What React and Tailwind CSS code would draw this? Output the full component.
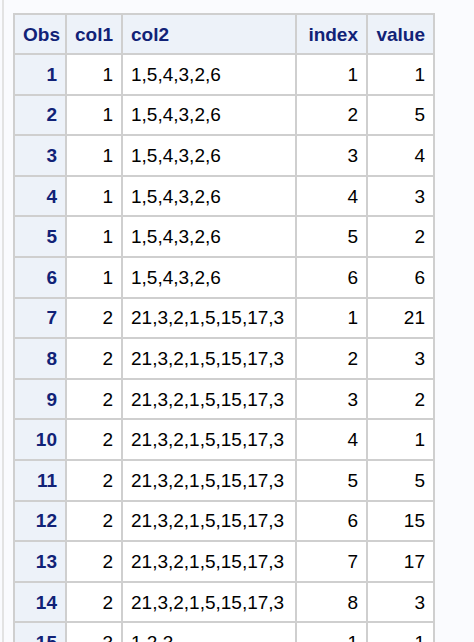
import React from "react";

const rows = [];
for (let i = 0; i < 6; i++) {
  const v = [1, 5, 4, 3, 2, 6];
  rows.push([i + 1, 1, "1,5,4,3,2,6", i + 1, v[i]]);
}
const v2 = [21, 3, 2, 1, 5, 15, 17, 3];
for (let i = 0; i < 8; i++) {
  rows.push([i + 7, 2, "21,3,2,1,5,15,17,3", i + 1, v2[i]]);
}
rows.push([15, 3, "1,2,3", 1, 1]);

export default function App() {
  return (
    <div className="h-[642px] w-[474px] overflow-hidden bg-[#fafbfe] pl-[2px]">
      <div className="h-full border-l-2 border-[#e3e3e3] pl-[9px] pt-[13px]">
        <table
          className="w-[422px] table-fixed border-collapse text-[19px] leading-none"
          style={{ fontFamily: '"Liberation Sans", Arial, sans-serif' }}
        >
          <thead>
            <tr className="h-[40px] bg-[#edf2f9] font-bold text-[#112277]">
              <th className="w-[52px] border-2 border-[#cfcfcf] px-[8px] text-left">Obs</th>
              <th className="w-[56px] border-2 border-[#cfcfcf] px-[8px] text-left">col1</th>
              <th className="w-[174px] border-2 border-[#cfcfcf] px-[8px] text-left">col2</th>
              <th className="w-[71px] border-2 border-[#cfcfcf] px-[8px] text-right">index</th>
              <th className="w-[67px] border-2 border-[#cfcfcf] px-[8px] text-right">value</th>
            </tr>
          </thead>
          <tbody>
            {rows.map((r) => (
              <tr key={r[0]} className="h-[40.6px]">
                <th className="border-2 border-[#cfcfcf] bg-[#edf2f9] px-[8px] text-right font-bold text-[#112277]">
                  {r[0]}
                </th>
                <td className="border-2 border-[#cfcfcf] bg-white px-[8px] text-right text-black">{r[1]}</td>
                <td className="border-2 border-[#cfcfcf] bg-white px-[8px] text-left text-black">{r[2]}</td>
                <td className="border-2 border-[#cfcfcf] bg-white px-[8px] text-right text-black">{r[3]}</td>
                <td className="border-2 border-[#cfcfcf] bg-white px-[8px] text-right text-black">{r[4]}</td>
              </tr>
            ))}
          </tbody>
        </table>
      </div>
    </div>
  );
}
